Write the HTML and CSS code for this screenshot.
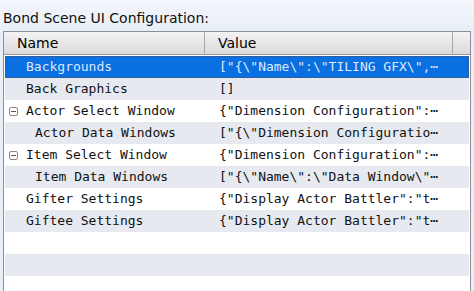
FILE: index.html
```
<!DOCTYPE html>
<html lang="en">
<head>
    <meta charset="UTF-8">
    <title>Bond Scene UI Configuration</title>
    <link rel="stylesheet" href="styles.css">
</head>
<body>

<div class="title">Bond Scene UI Configuration:</div>

<div class="grid">
    <div class="head">
        <div class="hcell name-col">Name</div>
        <div class="hcell value-col">Value</div>
        <div class="hcell spare"></div>
    </div>

    <div class="row selected">
        <div class="cell name-col"><span class="label">Backgrounds</span></div>
        <div class="cell value-col">["{\"Name\":\"TILING GFX\",⋯</div>
    </div>
    <div class="row alt">
        <div class="cell name-col"><span class="label">Back Graphics</span></div>
        <div class="cell value-col">[]</div>
    </div>
    <div class="row">
        <div class="cell name-col"><span class="toggle"></span><span class="label">Actor Select Window</span></div>
        <div class="cell value-col">{"Dimension Configuration":⋯</div>
    </div>
    <div class="row alt">
        <div class="cell name-col"><span class="label child">Actor Data Windows</span></div>
        <div class="cell value-col">["{\"Dimension Configuratio⋯</div>
    </div>
    <div class="row">
        <div class="cell name-col"><span class="toggle"></span><span class="label">Item Select Window</span></div>
        <div class="cell value-col">{"Dimension Configuration":⋯</div>
    </div>
    <div class="row alt">
        <div class="cell name-col"><span class="label child">Item Data Windows</span></div>
        <div class="cell value-col">["{\"Name\":\"Data Window\"⋯</div>
    </div>
    <div class="row">
        <div class="cell name-col"><span class="label">Gifter Settings</span></div>
        <div class="cell value-col">{"Display Actor Battler":"t⋯</div>
    </div>
    <div class="row alt">
        <div class="cell name-col"><span class="label">Giftee Settings</span></div>
        <div class="cell value-col">{"Display Actor Battler":"t⋯</div>
    </div>
    <div class="row"></div>
    <div class="row alt"></div>
    <div class="row"></div>
</div>

</body>
</html>
```

FILE: styles.css
```
body {
    margin: 0;
    height: 291px;
    overflow: hidden;
    background: linear-gradient(#f3f6fb, #e9eff7 30px);
    font-family: "DejaVu Sans", sans-serif;
    color: #111;
}
.title {
    padding: 10px 0 0 3px;
    height: 31px;
    font-size: 14px;
    box-sizing: border-box;
}
.grid {
    margin: 0 3px;
    border: 1px solid #8c8f94;
    border-bottom: none;
    background: #fff;
    height: 260px;
    box-sizing: border-box;
    overflow: hidden;
}
.head {
    display: flex;
    height: 23px;
    background: linear-gradient(#f4f4f4, #dadada);
    border-bottom: 1px solid #9a9a9a;
    box-sizing: border-box;
}
.hcell {
    font-size: 14px;
    line-height: 22px;
    color: #000;
    border-right: 1px solid #a8a8a8;
    box-sizing: border-box;
}
.head .name-col {
    width: 201px;
    padding-left: 13px;
}
.head .value-col {
    width: 248px;
    padding-left: 13px;
}
.spare {
    flex: 1;
    border-right: none;
}
.row {
    display: flex;
    height: 22px;
    margin: 0 1px;
    font-family: "DejaVu Sans Mono", monospace;
    font-size: 13px;
    line-height: 22px;
    white-space: nowrap;
}
.row.alt {
    background: #e6eaf0;
}
.row.selected {
    margin-top: 1px;
    background: #0a6fe0;
    color: #dce9ff;
    outline: 1px solid #2f5f9e;
    outline-offset: -1px;
}
.row .name-col {
    width: 200px;
    display: flex;
    align-items: center;
}
.row .value-col {
    padding-left: 14px;
}
.label {
    margin-left: 21px;
}
.label.child {
    margin-left: 30px;
}
.toggle {
    width: 9px;
    height: 9px;
    border: 1px solid #888;
    border-radius: 2px;
    margin-left: 4px;
    position: relative;
    box-sizing: border-box;
    background: #fff;
}
.toggle::after {
    content: "";
    position: absolute;
    left: 1px;
    right: 1px;
    top: 3px;
    height: 1px;
    background: #555;
}
.toggle + .label {
    margin-left: 8px;
}
```
